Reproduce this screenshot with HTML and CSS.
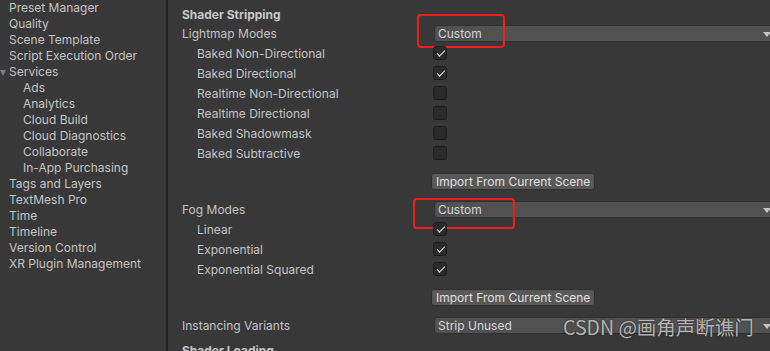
FILE: index.html
```html
<!DOCTYPE html>
<html>
<head>
	<meta charset="utf-8">
	<title>Project Settings - Graphics</title>
	<link rel="stylesheet" href="styles.css">
</head>
<body>
	<div class="window">
		<ul class="side">
			<li>Preset Manager</li>
			<li>Quality</li>
			<li>Scene Template</li>
			<li>Script Execution Order</li>
			<li class="fold">Services</li>
			<li class="sub">Ads</li>
			<li class="sub">Analytics</li>
			<li class="sub">Cloud Build</li>
			<li class="sub">Cloud Diagnostics</li>
			<li class="sub">Collaborate</li>
			<li class="sub">In-App Purchasing</li>
			<li>Tags and Layers</li>
			<li>TextMesh Pro</li>
			<li>Time</li>
			<li>Timeline</li>
			<li>Version Control</li>
			<li>XR Plugin Management</li>
		</ul>

		<div class="main">
			<div class="head">Shader Stripping</div>

			<div class="row">
				<span class="label">Lightmap Modes</span>
				<div class="ctrl">
					<div class="drop">Custom</div>
					<div class="mark mark-a"></div>
				</div>
			</div>
			<div class="row">
				<span class="label indent">Baked Non-Directional</span>
				<div class="ctrl"><span class="check on"></span></div>
			</div>
			<div class="row">
				<span class="label indent">Baked Directional</span>
				<div class="ctrl"><span class="check on"></span></div>
			</div>
			<div class="row">
				<span class="label indent">Realtime Non-Directional</span>
				<div class="ctrl"><span class="check"></span></div>
			</div>
			<div class="row">
				<span class="label indent">Realtime Directional</span>
				<div class="ctrl"><span class="check"></span></div>
			</div>
			<div class="row">
				<span class="label indent">Baked Shadowmask</span>
				<div class="ctrl"><span class="check"></span></div>
			</div>
			<div class="row">
				<span class="label indent">Baked Subtractive</span>
				<div class="ctrl"><span class="check"></span></div>
			</div>
			<div class="row spaced">
				<span class="label"></span>
				<div class="ctrl"><button class="btn">Import From Current Scene</button></div>
			</div>

			<div class="row">
				<span class="label">Fog Modes</span>
				<div class="ctrl">
					<div class="drop">Custom</div>
					<div class="mark mark-b"></div>
				</div>
			</div>
			<div class="row">
				<span class="label indent">Linear</span>
				<div class="ctrl"><span class="check on"></span></div>
			</div>
			<div class="row">
				<span class="label indent">Exponential</span>
				<div class="ctrl"><span class="check on"></span></div>
			</div>
			<div class="row">
				<span class="label indent">Exponential Squared</span>
				<div class="ctrl"><span class="check on"></span></div>
			</div>
			<div class="row spaced">
				<span class="label"></span>
				<div class="ctrl"><button class="btn">Import From Current Scene</button></div>
			</div>

			<div class="row">
				<span class="label">Instancing Variants</span>
				<div class="ctrl"><div class="drop">Strip Unused</div></div>
			</div>
			<div class="head">Shader Loading</div>
		</div>
	</div>
	<div class="watermark">CSDN @画角声断谯门</div>
</body>
</html>
```

FILE: styles.css
```css
*{
	margin: 0;
	padding: 0;
	list-style: none;
	box-sizing: border-box;
}
html,body{
	width: 770px;
	height: 351px;
	overflow: hidden;
	background: #383838;
}
body{
	font-family: Inter, "Noto Sans", sans-serif;
	font-size: 12px;
	color: #c4c4c4;
	position: relative;
}
.window{
	display: flex;
	width: 778px;
	height: 351px;
}
.side{
	width: 168px;
	flex-shrink: 0;
	border-right: 2px solid #232323;
	padding-left: 9px;
}
.side li{
	height: 16px;
	line-height: 16px;
	white-space: nowrap;
	position: relative;
}
.side .sub{
	padding-left: 14px;
}
.side .fold::before{
	content: "";
	position: absolute;
	left: -9px;
	top: 6px;
	border-left: 3px solid transparent;
	border-right: 3px solid transparent;
	border-top: 6px solid #7e7e7e;
}
.main{
	flex: 1;
	padding: 7px 0 0 14px;
}
.head{
	height: 16px;
	line-height: 16px;
	font-weight: bold;
	color: #c8c8c8;
}
.row + .head{
	margin-top: 8px;
}
.row{
	display: flex;
	height: 20px;
	align-items: center;
}
.row.spaced{
	margin: 8px 0;
}
.label{
	width: 251px;
	flex-shrink: 0;
	white-space: nowrap;
}
.label.indent{
	padding-left: 15px;
}
.ctrl{
	flex: 1;
	position: relative;
	display: flex;
	align-items: center;
}
.drop{
	flex: 1;
	height: 17px;
	line-height: 16px;
	margin-left: 1px;
	padding-left: 3px;
	background: #515151;
	border: 1px solid #303030;
	border-radius: 3px;
	color: #d6d6d6;
	position: relative;
}
.drop::after{
	content: "";
	position: absolute;
	right: 6px;
	top: 6px;
	border-left: 4px solid transparent;
	border-right: 4px solid transparent;
	border-top: 5px solid #c4c4c4;
}
.check{
	width: 14px;
	height: 14px;
	background: #2a2a2a;
	border: 1px solid #1d1d1d;
	border-radius: 3px;
	position: relative;
}
.check.on::after{
	content: "";
	position: absolute;
	left: 3px;
	top: 2px;
	width: 7px;
	height: 3px;
	border-left: 1.5px solid #e8e8e8;
	border-bottom: 1.5px solid #e8e8e8;
	transform: rotate(-45deg) translate(-1px, 1px);
}
.btn{
	font: inherit;
	height: 17px;
	padding: 0 4px;
	margin-left: -2px;
	background: #585858;
	border: 1px solid #303030;
	border-radius: 3px;
	color: #e0e0e0;
	line-height: 15px;
}
.mark{
	position: absolute;
	border: 2px solid #f21d1d;
	border-radius: 4px;
	pointer-events: none;
}
.mark-a{
	left: -16px;
	top: -11px;
	width: 88px;
	height: 34px;
}
.mark-b{
	left: -20px;
	top: -3px;
	width: 102px;
	height: 31px;
}
.watermark{
	position: absolute;
	left: 563px;
	top: 314px;
	font-family: "Noto Sans CJK SC", "Noto Sans", sans-serif;
	font-size: 19.5px;
	line-height: 26px;
	color: rgba(205, 205, 205, 0.85);
	text-shadow: 0 0 2px #202020;
	white-space: nowrap;
}
```
